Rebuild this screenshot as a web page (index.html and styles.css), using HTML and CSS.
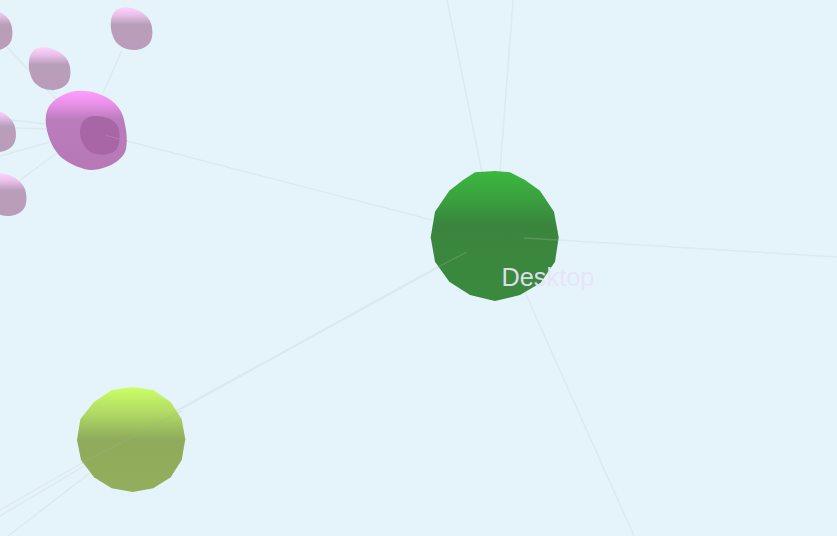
FILE: index.html
```html
<!DOCTYPE html>
<html lang="en">
<head>
<meta charset="utf-8">
<title>Graph</title>
<link rel="stylesheet" href="styles.css">
</head>
<body>
<svg class="scene" viewBox="0 0 837 536" width="837" height="536" xmlns="http://www.w3.org/2000/svg">
  <defs>
    <linearGradient id="g-green" x1="0" y1="0" x2="0" y2="1">
      <stop offset="0" stop-color="#3bb83f"/><stop offset=".2" stop-color="#3aa23e"/><stop offset=".42" stop-color="#3a853d"/><stop offset="1" stop-color="#3a8a3e"/>
    </linearGradient>
    <linearGradient id="g-lime" x1="0" y1="0" x2="0" y2="1">
      <stop offset="0" stop-color="#ccff66"/><stop offset=".25" stop-color="#b0d964"/><stop offset=".5" stop-color="#8fab5b"/><stop offset="1" stop-color="#93ae5c"/>
    </linearGradient>
    <linearGradient id="g-pink" x1="0" y1="0" x2="0" y2="1">
      <stop offset="0" stop-color="#ff9dff"/><stop offset=".18" stop-color="#e68fe6"/><stop offset=".36" stop-color="#bb7cbd"/><stop offset="1" stop-color="#b778b6"/>
    </linearGradient>
    <linearGradient id="g-small" x1="0" y1="0" x2="0" y2="1">
      <stop offset="0" stop-color="#ffd2ff"/><stop offset=".18" stop-color="#e8c0e8"/><stop offset=".4" stop-color="#b99eba"/><stop offset="1" stop-color="#b99cb9"/>
    </linearGradient>
    <path id="blob" d="M125,7.300 C134,7.300 146,13 150,21 C153,27 153.500,37 150,42.500 C146,48 140,50 134,50 C127,50 120,47 116,42 C112,36 110,28 111,21 C112,12 117,7.300 125,7.300Z"/>
  </defs>

  <g class="edges">
    <line x1="447" y1="0" x2="482" y2="172"/>
    <line x1="513" y1="0" x2="500" y2="172"/>
    <line x1="558" y1="240" x2="837" y2="257"/>
    <line x1="524" y1="290" x2="634" y2="536"/>
    <line x1="127" y1="141" x2="432" y2="220"/>
    <line x1="122" y1="50" x2="103" y2="93"/>
    <line x1="47" y1="87" x2="57" y2="94"/>
    <line x1="7" y1="47" x2="57" y2="100"/>
    <line x1="12" y1="120" x2="46" y2="124"/>
    <line x1="15" y1="128" x2="46" y2="129"/>
    <line x1="0" y1="156" x2="50" y2="142"/>
    <line x1="20" y1="180" x2="57" y2="153"/>
    <line class="edge-strong" x1="440" y1="266" x2="82" y2="463"/>
    <line x1="82" y1="463" x2="0" y2="510"/>
    <line x1="86" y1="465" x2="0" y2="516"/>
    <line x1="90" y1="473" x2="8" y2="536"/>
  </g>

  <use href="#blob" class="node-small"/>
  <use href="#blob" class="node-small" transform="translate(-82 40)"/>
  <use href="#blob" class="node-small" transform="translate(-140 .5)"/>
  <use href="#blob" class="node-small" transform="translate(-136.500 102)"/>
  <use href="#blob" class="node-small" transform="translate(-126 166)"/>

  <path class="node-pink" d="M80,90.700 C92,90.500 106,95 115,103.500 C120,109 123,114 124,120 C126,128 127,135 126.700,141 C126.500,147 126,151 124,154 C120,160 113,165 106,167 C101,169 96,170 91,170 C83,169.500 71,165 62,158 C54,151 48,139 46,125 C45,115 47,109 50,105 C57,96 69,91 80,90.700Z"/>
  <path class="node-inner" d="M95,116 C106,116 116,120 118.500,128 C120.500,136 120,147 115,151 C108,156 98,155 92,153 C85,149 80,141 80,132 C80,122 86,116 95,116Z"/>
  <line class="edge-inner" x1="106" y1="135.500" x2="127" y2="141"/>

  <polygon class="node-lime" points="132.700,387 153.300,390 170.700,402 181.700,419.300 185.300,439.300 181.700,460 170.700,477.300 153.300,488.300 132.700,492 111.700,488.300 94,477.300 81,460 77,440 80.300,419.300 94,402 111.700,390"/>
  <line class="edge-faint" x1="182" y1="411" x2="82" y2="463"/>

  <polygon class="node-green" points="495,171 510,172.300 525,180 540,190.700 554,211.700 558.700,237.300 555,261.700 540.700,282.700 520,295 495,301 470,295 449.300,281.700 435,261.700 430.700,237.300 435,211.700 449.300,190.700 463,180 475,172.300"/>
  <line class="edge-faint" x1="524" y1="238" x2="558" y2="240"/>
  <line class="edge-faint" x1="467" y1="252" x2="438" y2="267"/>

  <text class="label" x="501.500" y="286">Desktop</text>
</svg>
</body>
</html>
```

FILE: styles.css
```css
html, body {
  margin: 0;
  padding: 0;
  width: 100%;
  height: 100%;
  overflow: hidden;
  background: #e5f4fb;
}

.scene {
  display: block;
}

.edges line {
  stroke: #dce9ee;
  stroke-width: 1.400;
}

.edges .edge-strong {
  stroke: #d9e8ed;
  stroke-width: 2;
}

.edge-inner {
  stroke: #b67ab6;
  stroke-width: 1.200;
}

.edge-faint {
  stroke: #9ab89a;
  stroke-width: 1.400;
  opacity: .3;
}

.node-small {
  fill: url(#g-small);
}

.node-pink {
  fill: url(#g-pink);
}

.node-inner {
  fill: #a866a6;
}

.node-lime {
  fill: url(#g-lime);
}

.node-green {
  fill: url(#g-green);
}

.label {
  font-family: "Liberation Sans", Arial, sans-serif;
  font-size: 25.300px;
  fill: #e8e2f9;
  fill-opacity: .95;
}
```
